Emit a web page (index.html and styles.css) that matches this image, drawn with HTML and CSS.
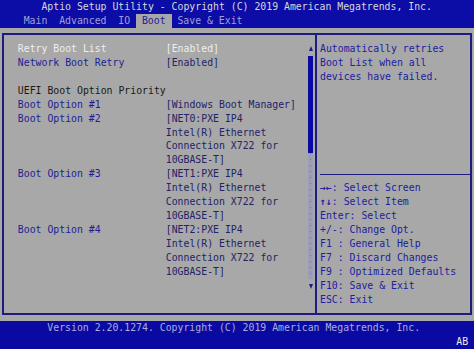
FILE: index.html
```html
<!DOCTYPE html>
<html lang="en">
<head>
    <meta charset="UTF-8">
    <meta name="viewport" content="width=device-width, initial-scale=1.0">
    <title>Aptio Setup Utility - Boot</title>
    <link rel="stylesheet" href="styles.css">
</head>
<body>
    <header class="topbar">
        <div class="title">Aptio Setup Utility - Copyright (C) 2019 American Megatrends, Inc.</div>
        <nav class="tabs">
            <span class="tab">Main</span><span class="tab">Advanced</span><span class="tab">IO</span><span class="tab active">Boot</span><span class="tab">Save &amp; Exit</span>
        </nav>
    </header>

    <main class="frame">
        <section class="left">
            <div class="options">
                <div class="label selected">Retry Boot List</div>
                <div class="value selected">[Enabled]</div>

                <div class="label">Network Boot Retry</div>
                <div class="value">[Enabled]</div>

                <div class="blank"></div>
                <div class="subtitle">UEFI Boot Option Priority</div>

                <div class="label">Boot Option #1</div>
                <div class="value">[Windows Boot Manager]</div>

                <div class="label">Boot Option #2</div>
                <div class="value">[NET0:PXE IP4<br>Intel(R) Ethernet<br>Connection X722 for<br>10GBASE-T]</div>

                <div class="label">Boot Option #3</div>
                <div class="value">[NET1:PXE IP4<br>Intel(R) Ethernet<br>Connection X722 for<br>10GBASE-T]</div>

                <div class="label">Boot Option #4</div>
                <div class="value">[NET2:PXE IP4<br>Intel(R) Ethernet<br>Connection X722 for<br>10GBASE-T]</div>
            </div>

            <div class="scrollbar">
                <div class="arrow"><span class="up"></span></div>
                <div class="thumb"></div>
                <div class="track"></div>
                <div class="arrow"><span class="down"></span></div>
            </div>
        </section>

        <aside class="right">
            <div class="help">Automatically retries<br>Boot List when all<br>devices have failed.</div>
            <div class="rule"></div>
            <ul class="keys">
                <li><b class="key">→←</b>: Select Screen</li>
                <li><b class="key">↑↓</b>: Select Item</li>
                <li>Enter: Select</li>
                <li>+/-: Change Opt.</li>
                <li>F1 : General Help</li>
                <li>F7 : Discard Changes</li>
                <li>F9 : Optimized Defaults</li>
                <li>F10: Save &amp; Exit</li>
                <li>ESC: Exit</li>
            </ul>
        </aside>
    </main>

    <footer class="footer">
        <div class="version">Version 2.20.1274. Copyright (C) 2019 American Megatrends, Inc.</div>
        <div class="badge">AB</div>
    </footer>
</body>
</html>
```

FILE: styles.css
```css
/* 80x25 text screen: one cell is 1ch wide and one row high */
:root {
    --row: 13.96px;
    --blue: #0c0ca6;
    --gray: #a8a8a8;
    --navy: #1e1e96;
    --line: #1c1c7e;
}

body {
    margin: 0;
    width: 474px;
    height: 349px;
    display: flex;
    flex-direction: column;
    overflow: hidden;
    background: var(--gray);
    color: var(--navy);
    font-family: "DejaVu Sans Mono", "Liberation Mono", monospace;
    font-size: 9.84px;
    line-height: var(--row);
    white-space: nowrap;
}

.topbar {
    background: var(--blue);
    height: calc(2 * var(--row));
}
.title {
    padding-left: 7ch;
    color: #d8d8d8;
}
.tabs {
    display: flex;
    padding-left: 3ch;
}
.tab {
    padding: 0 1ch;
    color: #a0a0d8;
    white-space: pre;
}
.tab.active {
    background: var(--gray);
    color: var(--navy);
}

.frame {
    flex: 1;
    display: flex;
    margin: 5px 2px 6px 2px;
    border: 2px solid var(--line);
}

.left {
    display: flex;
    width: 311px;
    padding-top: 6.9px;
    box-sizing: border-box;
}
.options {
    flex: 1;
    display: grid;
    grid-template-columns: 25ch 1fr;
    grid-auto-rows: min-content;
    align-content: start;
    padding-left: 13.8px;
}
.label {
    color: var(--navy);
}
.value {
    color: #222266;
}
.selected {
    color: #eeeeee;
}
.blank {
    grid-column: 1 / 3;
    height: var(--row);
}
.subtitle {
    grid-column: 1 / 3;
    color: #181818;
}

.scrollbar {
    align-self: flex-start;
    display: flex;
    flex-direction: column;
    width: 5px;
    height: calc(18 * var(--row));
    margin-right: 2px;
}
.arrow {
    height: var(--row);
    display: flex;
    align-items: center;
    justify-content: center;
}
.up, .down {
    width: 0;
    height: 0;
    border-left: 2.5px solid transparent;
    border-right: 2.5px solid transparent;
}
.up {
    border-bottom: 5px solid var(--line);
}
.down {
    border-top: 5px solid var(--line);
}
.thumb {
    height: 97px;
    background: #0b0ba4;
}
.track {
    flex: 1;
    background-color: #9c9cb8;
    background-image: repeating-linear-gradient(to bottom, #74749a 0 1px, transparent 1px 6px);
    background-size: 1px 100%;
    background-position: center;
    background-repeat: no-repeat;
}

.right {
    flex: 1;
    border-left: 2px solid var(--line);
    padding: 6.9px 0 0 3px;
}
.help {
    height: calc(9 * var(--row));
    color: #2020a0;
}
.rule {
    height: 1px;
    margin: 6.5px 0 6.46px 0;
    background: var(--line);
}
.keys {
    margin: 0;
    padding: 0;
    list-style: none;
    color: #2020a0;
}
.key {
    font-weight: bold;
}

.footer {
    background: #0a0aa2;
    height: calc(2 * var(--row));
}
.version {
    padding-left: 8ch;
    color: #acacdc;
}
.badge {
    text-align: right;
    padding-right: 1ch;
    color: #ececec;
}
```
